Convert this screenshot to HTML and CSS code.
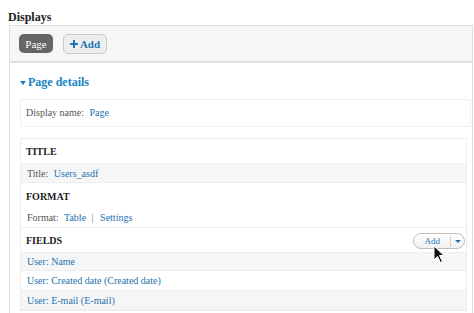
FILE: index.html
```html
<!DOCTYPE html>
<html lang="en">
<head>
    <meta charset="UTF-8">
    <title>Displays</title>
    <link rel="stylesheet" href="styles.css">
</head>
<body>

    <div class="displays">
        <h2>Displays</h2>

        <div class="panel">
            <div class="tabs">
                <span class="tab active">Page</span>
                <span class="tab add">
                    <svg width="8" height="8" viewBox="0 0 8 8"><path d="M3 0h2v3h3v2H5v3H3V5H0V3h3z"/></svg>Add
                </span>
            </div>

            <div class="details">
                <div class="details-title"><span class="caret"></span>Page details</div>

                <div class="name-box">
                    <span class="label">Display name:</span> <a href="#">Page</a>
                </div>

                <div class="columns">
                    <div class="col-head">Title</div>
                    <div class="col-row grey">
                        <span class="label">Title:</span> <a href="#">Users_asdf</a>
                    </div>

                    <div class="col-head">Format</div>
                    <div class="col-row line">
                        <span class="label">Format:</span> <a href="#">Table</a>
                        <span class="sep">|</span> <a href="#">Settings</a>
                    </div>

                    <div class="col-head fields">
                        Fields
                        <span class="dropbutton">
                            <span class="drop-main">Add</span>
                            <span class="drop-toggle"></span>
                        </span>
                    </div>
                    <div class="col-row grey"><a href="#">User: Name</a></div>
                    <div class="col-row"><a href="#">User: Created date (Created date)</a></div>
                    <div class="col-row grey"><a href="#">User: E-mail (E-mail)</a></div>
                </div>
            </div>
        </div>
    </div>

    <!-- mouse pointer over the add button -->
    <svg class="pointer" width="13" height="19" viewBox="0 0 13 19">
        <path d="M1 1 L1 15 L4.5 11.5 L7.5 17.5 L9.5 16.5 L6.5 10.5 L11 10.5 Z"/>
    </svg>

</body>
</html>
```

FILE: styles.css
```css
body{
    margin: 0;
    background: #fff;
    font-family: "Liberation Serif", "Times New Roman", serif;
    font-size: 10px;
    color: #333;
    overflow: hidden;
}

a{
    color: #2373b3;
    text-decoration: none;
}

.displays{
    padding-top: 10px;
}

.displays h2{
    margin: 0 0 1px 8px;
    font-size: 12px;
    line-height: 14px;
    color: #222;
}

.panel{
    margin: 0 1px 0 9px;
    border: 1px solid #ddd;
    border-bottom: none;
    min-height: 300px;
}

.tabs{
    display: flex;
    align-items: center;
    gap: 10px;
    height: 35px;
    padding: 0 9px;
    background: #f6f6f6;
    border-bottom: 2px solid #e0e0e0;
}

.tab{
    display: inline-flex;
    align-items: center;
    box-sizing: border-box;
    height: 20px;
    border-radius: 5px;
    font-size: 10px;
}

.tab.active{
    width: 34px;
    height: 19px;
    justify-content: center;
    background: #656565;
    color: #fff;
    font-size: 11px;
}

.tab.add{
    width: 44px;
    justify-content: center;
    gap: 2px;
    background: #eeeeee;
    border: 1px solid #cbcbcb;
    color: #1f73b5;
    font-weight: bold;
    font-size: 11px;
}

.tab.add svg{
    fill: #1f73b5;
}

.details{
    padding: 12px 1px 12px 10px;
}

.details-title{
    display: flex;
    align-items: center;
    gap: 2px;
    font-size: 12px;
    line-height: 14px;
    font-weight: bold;
    color: #1583c2;
    margin-bottom: 10px;
}

.caret{
    width: 0;
    height: 0;
    border-left: 3px solid transparent;
    border-right: 3px solid transparent;
    border-top: 4px solid #1583c2;
    margin-top: 1px;
}

.name-box{
    padding: 7px 5px;
    line-height: 12px;
    border: 1px solid #f0f0f0;
}

.label{
    color: #555;
    margin-right: 3px;
}

.sep{
    color: #777;
    margin: 0 4px 0 3px;
}

.columns{
    margin: 11px 4px 0 0;
    border: 1px solid #ececec;
}

.col-head{
    padding: 7px 5px 5px;
    line-height: 12px;
    font-weight: bold;
    text-transform: uppercase;
    color: #222;
}

.col-head + .col-head,
.col-row + .col-head{
    padding-top: 8px;
    padding-bottom: 4px;
}

.col-head.fields{
    display: flex;
    align-items: center;
    justify-content: space-between;
    padding: 5px 1px 3px 5px;
}

.col-row{
    padding: 5px 5px 3px 6px;
    line-height: 12px;
}

.col-row.grey{
    background: #f6f6f6;
    border-top: 1px solid #eeeeee;
    border-bottom: 1px solid #eeeeee;
    padding-top: 4px;
    padding-bottom: 2px;
}

.col-row.line{
    border-bottom: 1px solid #eeeeee;
}

.fields + .col-row{
    padding-top: 3px;
}

.col-row + .col-row{
    padding-top: 4px;
}

.dropbutton{
    display: inline-flex;
    align-items: center;
    height: 14px;
    border: 1px solid #bdbdbd;
    border-radius: 8px;
    background: linear-gradient(#ffffff, #f1f1f1);
    font-weight: normal;
    text-transform: none;
    font-size: 9px;
}

.drop-main{
    padding: 0 10px 0 11px;
    color: #2373b3;
    line-height: 14px;
}

.drop-toggle{
    position: relative;
    width: 13px;
    height: 10px;
    border-left: 1px solid #d2d2d2;
}

.drop-toggle::after{
    content: '';
    position: absolute;
    left: 4px;
    top: 4px;
    border-left: 3px solid transparent;
    border-right: 3px solid transparent;
    border-top: 3px solid #2373b3;
}

.pointer{
    position: absolute;
    left: 433px;
    top: 245px;
}

.pointer path{
    fill: #111;
    stroke: #fff;
    stroke-width: 1;
}
```
